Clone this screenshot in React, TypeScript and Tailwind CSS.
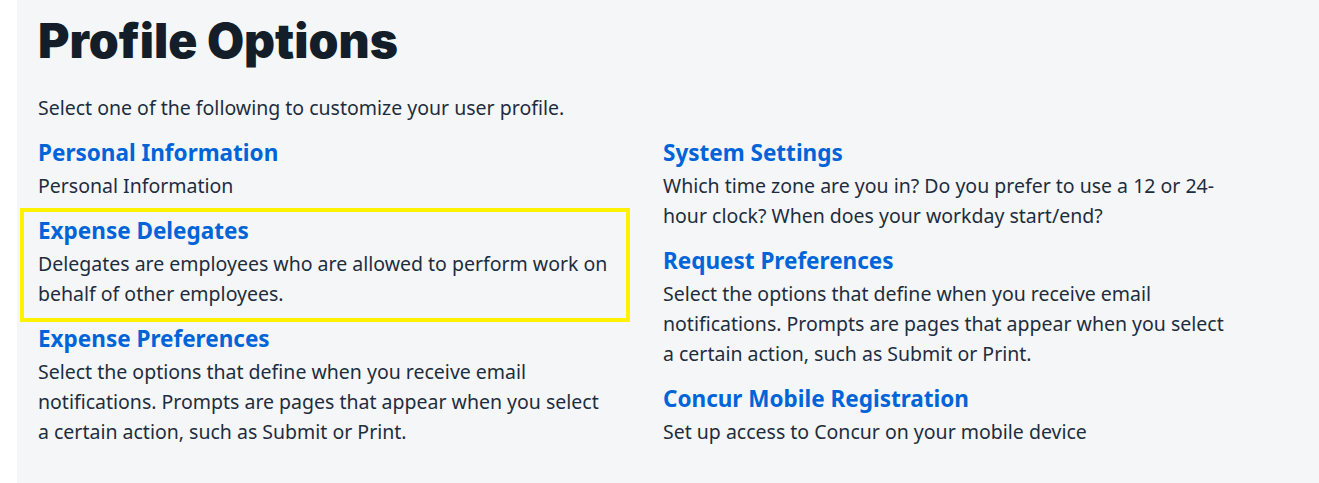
import React from "react";

type Option = {
  title: string;
  text: string;
  highlighted?: boolean;
};

const leftOptions: Option[] = [
  { title: "Personal Information", text: "Personal Information" },
  {
    title: "Expense Delegates",
    text: "Delegates are employees who are allowed to perform work on behalf of other employees.",
    highlighted: true,
  },
  {
    title: "Expense Preferences",
    text: "Select the options that define when you receive email notifications. Prompts are pages that appear when you select a certain action, such as Submit or Print.",
  },
];

const rightOptions: Option[] = [
  {
    title: "System Settings",
    text: "Which time zone are you in? Do you prefer to use a 12 or 24-hour clock? When does your workday start/end?",
  },
  {
    title: "Request Preferences",
    text: "Select the options that define when you receive email notifications. Prompts are pages that appear when you select a certain action, such as Submit or Print.",
  },
  {
    title: "Concur Mobile Registration",
    text: "Set up access to Concur on your mobile device",
  },
];

const OptionItem: React.FC<{ option: Option }> = ({ option }) => (
  <div className="relative mb-[12px]">
    {/* highlight frame */}
    {option.highlighted && (
      <span className="pointer-events-none absolute -left-[18px] -right-[19px] -top-[5px] -bottom-[13px] border-4 border-[#fff200]" />
    )}
    <a className="block text-[22.5px] leading-[36px] font-bold text-[#0064d9] cursor-pointer">
      {option.title}
    </a>
    <p className="text-[19.5px] leading-[30px] text-[#1d2d3e]">{option.text}</p>
  </div>
);

export default function App() {
  return (
    <div className="h-[483px] w-full bg-white pl-[17px] font-['Noto_Sans',Arial,sans-serif]">
      <div className="h-full bg-[#f5f6f7] pl-[21px] pt-[11px]">
        {/* Title */}
        <h1 className="text-[48px] leading-[60px] font-black text-[#131e29] font-['Inter',sans-serif]">
          Profile Options
        </h1>

        <p className="mt-[22px] text-[19.5px] leading-[30px] text-[#1d2d3e]">
          Select one of the following to customize your user profile.
        </p>

        {/* Options */}
        <div className="mt-[12px] flex gap-[52px]">
          <div className="w-[573px]">
            {leftOptions.map((o) => (
              <OptionItem key={o.title} option={o} />
            ))}
          </div>
          <div className="w-[575px]">
            {rightOptions.map((o) => (
              <OptionItem key={o.title} option={o} />
            ))}
          </div>
        </div>
      </div>
    </div>
  );
}
